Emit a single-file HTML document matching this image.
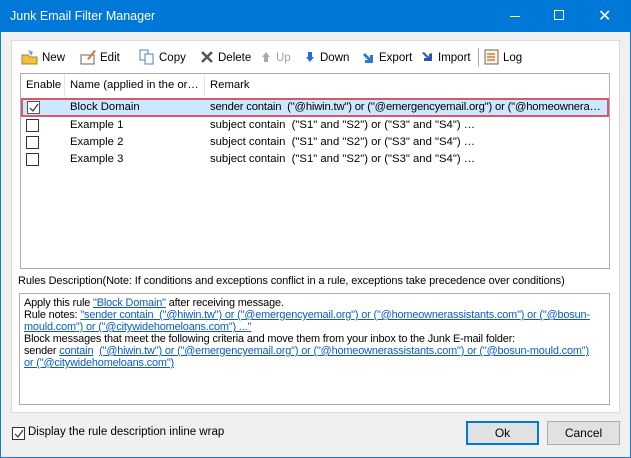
<!DOCTYPE html>
<html><head><style>
*{box-sizing:border-box;margin:0;padding:0}
body{width:631px;height:458px;overflow:hidden;background:#f0f0f0;font-family:"Liberation Sans",sans-serif;font-size:11.5px;color:#000;position:relative}
.win{position:absolute;left:0;top:0;width:631px;height:458px;border:1px solid #1a7ad4;border-top:none}
.title{position:absolute;left:0;top:0;width:631px;height:32px;background:#0078d7;color:#fff;font-size:12.5px}
.title span{position:absolute;left:10px;top:9px}
.panel{position:absolute;left:11px;top:40px;width:609px;height:373px;background:#fff;border:1px solid #dcdcdc}
.tb{position:absolute;top:50px;height:16px;line-height:16px;font-size:11.5px}
.list{position:absolute;left:20px;top:73px;width:590px;height:196px;border:1px solid #adadad;background:#fff;font-size:11.3px}
.hdr{position:absolute;top:0;height:22px;line-height:22px}
.vd{position:absolute;top:0;width:1px;height:22px;background:#e5e5e5}
.row{position:absolute;left:0;width:588px;height:17px;line-height:17px;white-space:nowrap}
.cb{position:absolute;left:5px;width:13px;height:13px;border:1px solid #333;background:#fff}
.desc{position:absolute;left:19px;top:293px;width:591px;height:112px;border:1px solid #adadad;background:#fff;padding:3px 4px;line-height:12px;font-size:10.9px;letter-spacing:-0.15px}
a{color:#0a5bc4;text-decoration:underline}
.btn{position:absolute;top:421px;height:24px;background:#e1e1e1;border:1px solid #adadad;text-align:center;line-height:22px;font-size:12px}
</style></head><body>
<div class="win"></div>
<div class="title"><span>Junk Email Filter Manager</span>
<div style="position:absolute;left:510px;top:16px;width:10px;height:1px;background:#fff"></div>
<div style="position:absolute;left:554px;top:10px;width:10px;height:10px;border:1px solid #fff"></div>
<div style="position:absolute;left:598px;top:6px;font-size:16px;color:#fff">✕</div>
</div>
<div class="panel"></div>
<svg style="position:absolute;left:21px;top:48px" width="18" height="18"><path d="M1 7h6l2 2h7v7H1z" fill="#f0c040" stroke="#b08020"/><path d="M7 2l5 2-2 4z" fill="#6aa0e0"/></svg>
<div class="tb" style="left:42px">New</div>
<svg style="position:absolute;left:80px;top:49px" width="16" height="16"><rect x="1" y="6" width="13" height="9" fill="#fff" stroke="#666"/><path d="M7 10l7-9 2 1-7 9z" fill="#d08040"/></svg>
<div class="tb" style="left:100px">Edit</div>
<svg style="position:absolute;left:139px;top:49px" width="16" height="16"><rect x="1" y="1" width="8" height="10" fill="#fff" stroke="#5080c0"/><rect x="6" y="5" width="8" height="10" fill="#fff" stroke="#5080c0"/></svg>
<div class="tb" style="left:159px">Copy</div>
<svg style="position:absolute;left:200px;top:50px" width="14" height="14"><path d="M2 2l10 10M12 2L2 12" stroke="#555" stroke-width="2.5"/></svg>
<div class="tb" style="left:218px">Delete</div>
<svg style="position:absolute;left:261px;top:51px" width="10" height="12"><path d="M5 1l4 5H7v5H3V6H1z" fill="#aaa"/></svg>
<div class="tb" style="left:276px;color:#a0a0a0">Up</div>
<svg style="position:absolute;left:305px;top:51px" width="10" height="12"><path d="M5 11l4-5H7V1H3v5H1z" fill="#2a6ad8"/></svg>
<div class="tb" style="left:320px">Down</div>
<svg style="position:absolute;left:361px;top:51px" width="13" height="13"><path d="M2 4l5 5-3 0 0 3 8 0 0-8-3 0 0 3-5-5z" fill="#2a7ad0"/></svg>
<div class="tb" style="left:379px">Export</div>
<svg style="position:absolute;left:421px;top:51px" width="13" height="13"><path d="M11 2v8H3V7h3L1 2l2-1 5 5V3z" fill="#2a5ab0"/></svg>
<div class="tb" style="left:438px">Import</div>
<div style="position:absolute;left:478px;top:48px;width:1px;height:19px;background:#aaa"></div>
<svg style="position:absolute;left:484px;top:49px" width="16" height="16"><rect x="1" y="1" width="13" height="14" fill="#fff8d0" stroke="#666"/><path d="M3 5h8M3 8h8M3 11h8" stroke="#c03030"/></svg>
<div class="tb" style="left:503px">Log</div>
<div class="list">
<div class="hdr" style="left:5px">Enable</div><div class="vd" style="left:43px"></div>
<div class="hdr" style="left:49px">Name (applied in the or…</div><div class="vd" style="left:183px"></div>
<div class="hdr" style="left:189px">Remark</div>
<div class="row" style="top:24px;background:#cce8ff;border:2px solid #d45a6a;left:0;width:588px;height:19px;line-height:15px;overflow:hidden"><div class="cb" style="top:1px;left:4px;border-color:#555"><svg width="11" height="11" style="position:absolute;left:0;top:0"><path d="M2 6l3 3 5-7" stroke="#333" fill="none" stroke-width="1.2"/></svg></div><span style="position:absolute;left:47px">Block Domain</span><span style="position:absolute;left:187px;letter-spacing:-0.2px">sender contain &nbsp;("@hiwin.tw") or ("@emergencyemail.org") or ("@homeownera…</span></div>
<div class="row" style="top:43px"><div class="cb" style="top:2px"></div><span style="position:absolute;left:49px">Example 1</span><span style="position:absolute;left:189px">subject contain &nbsp;("S1" and "S2") or ("S3" and "S4") …</span></div>
<div class="row" style="top:60px"><div class="cb" style="top:2px"></div><span style="position:absolute;left:49px">Example 2</span><span style="position:absolute;left:189px">subject contain &nbsp;("S1" and "S2") or ("S3" and "S4") …</span></div>
<div class="row" style="top:77px"><div class="cb" style="top:2px"></div><span style="position:absolute;left:49px">Example 3</span><span style="position:absolute;left:189px">subject contain &nbsp;("S1" and "S2") or ("S3" and "S4") …</span></div>
</div>
<div style="position:absolute;left:18px;top:275px;font-size:11px;letter-spacing:-0.1px">Rules Description(Note: If conditions and exceptions conflict in a rule, exceptions take precedence over conditions)</div>
<div class="desc">Apply this rule <a>"Block Domain"</a> after receiving message.<br>Rule notes: <a>"sender contain &nbsp;("@hiwin.tw") or ("@emergencyemail.org") or ("@homeownerassistants.com") or ("@bosun-<br>mould.com") or ("@citywidehomeloans.com") ..."</a><br>Block messages that meet the following criteria and move them from your inbox to the Junk E-mail folder:<br>sender <a>contain</a> &nbsp;<a>("@hiwin.tw") or ("@emergencyemail.org") or ("@homeownerassistants.com") or ("@bosun-mould.com")<br>or ("@citywidehomeloans.com")</a></div>
<div style="position:absolute;left:12px;top:427px;width:13px;height:13px;border:1px solid #333;background:#fff"><svg width="11" height="11" style="position:absolute;left:0;top:0"><path d="M2 6l3 3 5-7" stroke="#333" fill="none" stroke-width="1.2"/></svg></div>
<div style="position:absolute;left:28px;top:426px;font-size:11.5px">Display the rule description inline wrap</div>
<div class="btn" style="left:466px;width:73px;border:2px solid #0078d7;line-height:20px">Ok</div>
<div class="btn" style="left:547px;width:73px">Cancel</div>
</body></html>
